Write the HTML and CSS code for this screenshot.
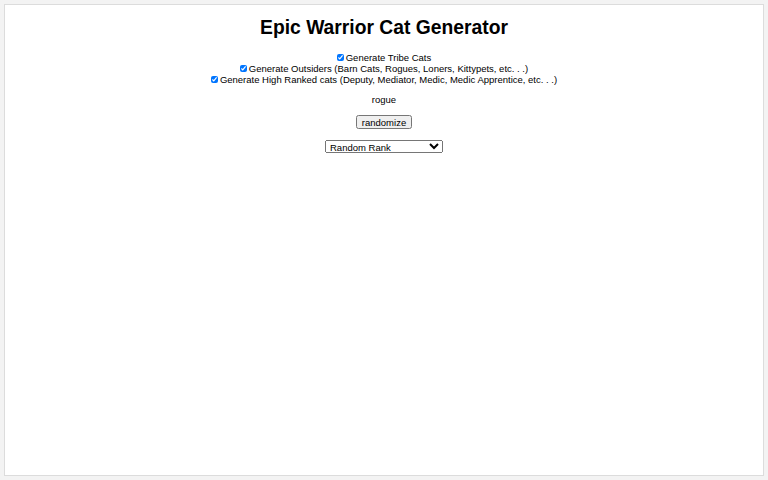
FILE: index.html
```html
<!DOCTYPE html>
<html>
<head>
<meta charset="utf-8">
<link rel="stylesheet" href="styles.css">
</head>
<body>
<main class="card">
  <h1 class="title">Epic Warrior Cat Generator</h1>
  <div class="options">
    <label class="opt"><input type="checkbox" class="cb" checked>Generate Tribe Cats</label>
    <label class="opt"><input type="checkbox" class="cb" checked>Generate Outsiders (Barn Cats, Rogues, Loners, Kittypets, etc. . .)</label>
    <label class="opt"><input type="checkbox" class="cb" checked>Generate High Ranked cats (Deputy, Mediator, Medic, Medic Apprentice, etc. . .)</label>
  </div>
  <p class="result">rogue</p>
  <button class="btn">randomize</button>
  <select class="sel">
    <option>Random Rank</option>
  </select>
</main>
</body>
</html>
```

FILE: styles.css
```css
html, body {
  margin: 0;
  padding: 0;
  height: 100%;
}
body {
  background: #f3f3f3;
  font-family: "Liberation Sans", Arial, sans-serif;
  color: #000;
  padding: 4px;
  box-sizing: border-box;
}
.card {
  box-sizing: border-box;
  height: 100%;
  background: #fff;
  border: 1px solid #dcdcdc;
  display: flex;
  flex-direction: column;
  align-items: center;
}
.title {
  margin: 11px 0 0;
  font-size: 19.3px;
  line-height: 24px;
  font-weight: bold;
}
.options {
  margin-top: 12px;
  display: flex;
  flex-direction: column;
  align-items: center;
}
.opt {
  font-size: 9.5px;
  line-height: 11px;
  height: 11px;
  display: flex;
  align-items: center;
}
.cb {
  width: 7px;
  height: 7px;
  margin: 0 2px 0 0;
}
.result {
  margin: 9px 0 0;
  font-size: 9.5px;
  line-height: 12px;
}
.btn {
  margin-top: 9px;
  font-family: "Liberation Sans", Arial, sans-serif;
  font-size: 9.5px;
  height: 14px;
  padding: 0 4px;
  line-height: 12px;
}
.sel {
  margin-top: 11px;
  width: 118px;
  height: 13px;
  font-family: "Liberation Sans", Arial, sans-serif;
  font-size: 9.5px;
  padding: 0;
}
```
